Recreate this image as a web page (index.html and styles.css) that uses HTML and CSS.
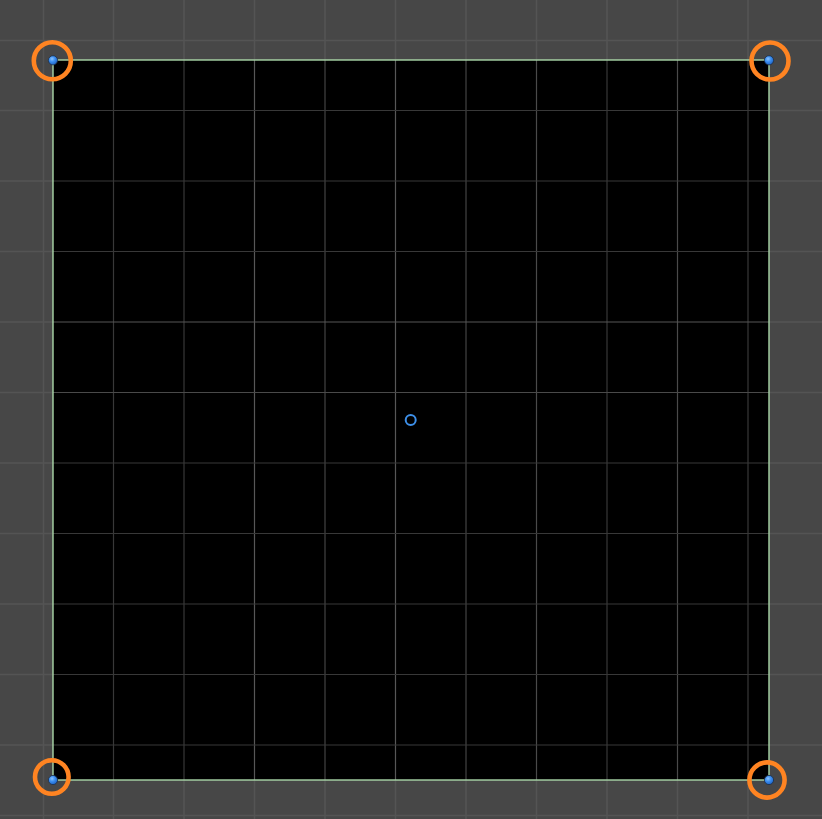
FILE: index.html
```html
<!DOCTYPE html>
<html>
<head>
<meta charset="utf-8">
<link rel="stylesheet" href="styles.css">
</head>
<body>
<div class="viewport">
<svg class="scene" width="822" height="819" viewBox="0 0 822 819" xmlns="http://www.w3.org/2000/svg">
  <defs>
    <radialGradient id="dot" cx="0.4" cy="0.35" r="0.7">
      <stop offset="0" stop-color="#8cc4ff"/>
      <stop offset="0.45" stop-color="#3b8ef0"/>
      <stop offset="1" stop-color="#1d5fc0"/>
    </radialGradient>
  </defs>
  <rect x="0" y="0" width="822" height="819" fill="#474747"/>
  <g class="grid-outer" stroke="#545454" stroke-width="1.5">
    <line x1="43.5" y1="0" x2="43.5" y2="819"/>
    <line x1="113.5" y1="0" x2="113.5" y2="819"/>
    <line x1="184" y1="0" x2="184" y2="819"/>
    <line x1="254.5" y1="0" x2="254.5" y2="819"/>
    <line x1="325" y1="0" x2="325" y2="819"/>
    <line x1="395.5" y1="0" x2="395.5" y2="819"/>
    <line x1="466" y1="0" x2="466" y2="819"/>
    <line x1="536.5" y1="0" x2="536.5" y2="819"/>
    <line x1="607" y1="0" x2="607" y2="819"/>
    <line x1="677.5" y1="0" x2="677.5" y2="819"/>
    <line x1="748" y1="0" x2="748" y2="819"/>
    <line x1="0" y1="40.5" x2="822" y2="40.5"/>
    <line x1="0" y1="110.5" x2="822" y2="110.5"/>
    <line x1="0" y1="181" x2="822" y2="181"/>
    <line x1="0" y1="251.5" x2="822" y2="251.5"/>
    <line x1="0" y1="322" x2="822" y2="322"/>
    <line x1="0" y1="392.5" x2="822" y2="392.5"/>
    <line x1="0" y1="463" x2="822" y2="463"/>
    <line x1="0" y1="533.5" x2="822" y2="533.5"/>
    <line x1="0" y1="604" x2="822" y2="604"/>
    <line x1="0" y1="674.5" x2="822" y2="674.5"/>
    <line x1="0" y1="745" x2="822" y2="745"/>
    <line x1="0" y1="815.5" x2="822" y2="815.5"/>
  </g>
  <rect x="53" y="60" width="716" height="720" fill="#000"/>
  <g class="grid-inner" stroke="#383838" stroke-width="1.2">
    <line x1="113.5" y1="60" x2="113.5" y2="780"/>
    <line x1="184" y1="60" x2="184" y2="780"/>
    <line x1="254.5" y1="60" x2="254.5" y2="780" stroke="#575757"/>
    <line x1="325" y1="60" x2="325" y2="780" stroke="#444"/>
    <line x1="395.5" y1="60" x2="395.5" y2="780" stroke="#575757"/>
    <line x1="466" y1="60" x2="466" y2="780" stroke="#444"/>
    <line x1="536.5" y1="60" x2="536.5" y2="780" stroke="#4a4a4a"/>
    <line x1="607" y1="60" x2="607" y2="780"/>
    <line x1="677.5" y1="60" x2="677.5" y2="780" stroke="#4a4a4a"/>
    <line x1="748" y1="60" x2="748" y2="780"/>
    <line x1="53" y1="110.5" x2="769" y2="110.5"/>
    <line x1="53" y1="181" x2="769" y2="181"/>
    <line x1="53" y1="251.5" x2="769" y2="251.5"/>
    <line x1="53" y1="322" x2="769" y2="322" stroke="#575757"/>
    <line x1="53" y1="392.5" x2="769" y2="392.5" stroke="#4a4a4a"/>
    <line x1="53" y1="463" x2="769" y2="463"/>
    <line x1="53" y1="533.5" x2="769" y2="533.5"/>
    <line x1="53" y1="604" x2="769" y2="604"/>
    <line x1="53" y1="674.5" x2="769" y2="674.5"/>
    <line x1="53" y1="745" x2="769" y2="745"/>
  </g>
  <rect x="53" y="60" width="716" height="720" fill="none" stroke="#aad8a8" stroke-width="1.4"/>
  <circle cx="410.7" cy="420" r="5" fill="none" stroke="#3d8fe8" stroke-width="2"/>
  <g class="handles" fill="url(#dot)" stroke="#1c2f48" stroke-width="0.8">
    <circle cx="53" cy="60.3" r="4.6"/>
    <circle cx="769" cy="60.3" r="4.6"/>
    <circle cx="53" cy="780" r="4.6"/>
    <circle cx="769" cy="780" r="4.6"/>
  </g>
  <g class="rings" fill="none" stroke="#ff8422" stroke-width="4.6">
    <circle cx="52.3" cy="60.8" r="18.5"/>
    <circle cx="770" cy="61" r="18.5"/>
    <circle cx="51.8" cy="777" r="16.8"/>
    <circle cx="767" cy="780" r="17.6"/>
  </g>
</svg>
</div>
</body>
</html>
```

FILE: styles.css
```css
html, body {
  margin: 0;
  padding: 0;
  background: #474747;
}
.viewport {
  width: 822px;
  height: 819px;
  overflow: hidden;
}
.scene {
  display: block;
}
```
